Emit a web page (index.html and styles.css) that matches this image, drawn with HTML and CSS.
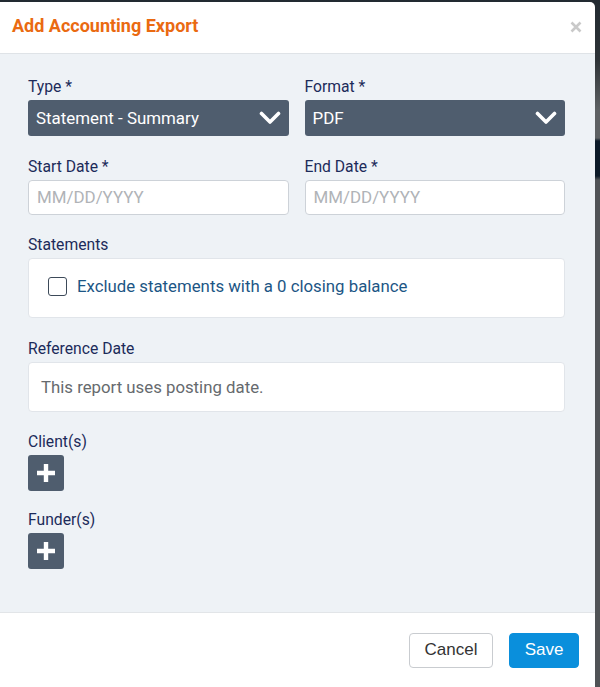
FILE: index.html
```html
<!DOCTYPE html>
<html>
<head>
<meta charset="utf-8">
<link rel="stylesheet" href="styles.css">
</head>
<body>
<div class="modal">
  <div class="modal-header">
    <h4 class="title">Add Accounting Export</h4>
    <span class="close"><svg width="12" height="12" viewBox="0 0 12 12"><path d="M1.5 1.5L10.5 10.5M10.5 1.5L1.5 10.5" stroke="#c9c9c9" stroke-width="2.6" stroke-linecap="butt"/></svg></span>
  </div>
  <div class="modal-body">
    <div class="row">
      <div class="field">
        <label class="lbl">Type *</label>
        <div class="select"><span>Statement - Summary</span><svg class="chev" width="22" height="14" viewBox="0 0 22 14"><path d="M2.5 2.5L11 11L19.5 2.5" fill="none" stroke="#fff" stroke-width="3.6" stroke-linecap="round" stroke-linejoin="round"/></svg></div>
      </div>
      <div class="field">
        <label class="lbl">Format *</label>
        <div class="select"><span>PDF</span><svg class="chev" width="22" height="14" viewBox="0 0 22 14"><path d="M2.5 2.5L11 11L19.5 2.5" fill="none" stroke="#fff" stroke-width="3.6" stroke-linecap="round" stroke-linejoin="round"/></svg></div>
      </div>
    </div>
    <div class="row">
      <div class="field">
        <label class="lbl">Start Date *</label>
        <div class="input">MM/DD/YYYY</div>
      </div>
      <div class="field">
        <label class="lbl">End Date *</label>
        <div class="input">MM/DD/YYYY</div>
      </div>
    </div>
    <div class="field">
      <label class="lbl">Statements</label>
      <div class="panel check-panel">
        <span class="checkbox"></span>
        <span class="check-text">Exclude statements with a 0 closing balance</span>
      </div>
    </div>
    <div class="field">
      <label class="lbl">Reference Date</label>
      <div class="panel ref-panel">This report uses posting date.</div>
    </div>
    <div class="field client">
      <label class="lbl">Client(s)</label>
      <button class="add"><svg width="20" height="20" viewBox="0 0 20 20"><path d="M10 1V19M1 10H19" stroke="#fff" stroke-width="4.4"/></svg></button>
    </div>
    <div class="field last">
      <label class="lbl">Funder(s)</label>
      <button class="add"><svg width="20" height="20" viewBox="0 0 20 20"><path d="M10 1V19M1 10H19" stroke="#fff" stroke-width="4.4"/></svg></button>
    </div>
  </div>
  <div class="modal-footer">
    <button class="btn btn-cancel">Cancel</button>
    <button class="btn btn-save">Save</button>
  </div>
</div>
</body>
</html>
```
FILE: styles.css
```css
html, body {
  margin: 0;
  padding: 0;
  height: 687px;
  overflow: hidden;
}
body {
  padding-top: 2px;
  box-sizing: border-box;
  background: linear-gradient(to bottom, #222a31 0, #2e3337 60px, #5e6163 110px, #5e6163 138px, #0c1a28 141px, #0c1a28 176px, #505356 180px, #505356 100%);
  font-family: Roboto, "Liberation Sans", sans-serif;
}
.modal {
  width: 595px;
  background: #fff;
  border-top-right-radius: 5px;
  overflow: hidden;
}
.modal-header {
  display: flex;
  align-items: flex-start;
  justify-content: space-between;
  padding: 13px 12px 0 12px;
  border-bottom: 1px solid #dfe3e7;
  box-sizing: border-box;
  height: 52px;
}
.title {
  margin: 0;
  font-size: 18px;
  line-height: 21px;
  font-weight: 700;
  color: #ea6a11;
}
.close {
  display: flex;
  margin-right: 1px;
  margin-top: 6px;
}
.modal-body {
  background: #eef2f6;
  padding: 24px 30px 43px 28px;
}
.row {
  display: grid;
  grid-template-columns: 1fr 1fr;
  gap: 16px;
}
.field {
  margin-bottom: 21.5px;
}
.field.client {
  margin-bottom: 19.5px;
}
.field.last {
  margin-bottom: 0;
}
.lbl {
  display: block;
  font-size: 15.7px;
  line-height: 18px;
  color: #1c2b5a;
  margin-bottom: 4px;
}
.select {
  height: 36px;
  background: #4f5d6e;
  border-radius: 3px;
  display: flex;
  align-items: center;
  justify-content: space-between;
  padding: 0 8px 0 8px;
  color: #fff;
  font-size: 16.9px;
}
.chev {
  display: block;
}
.input {
  height: 35px;
  box-sizing: border-box;
  background: #fff;
  border: 1px solid #cdd2d8;
  border-radius: 4px;
  padding: 0 8px;
  display: flex;
  align-items: center;
  font-size: 16.9px;
  color: #b0b3b7;
}
.panel {
  background: #fff;
  border: 1px solid #e1e5ea;
  border-radius: 4px;
  box-sizing: border-box;
}
.check-panel {
  height: 60px;
  display: flex;
  align-items: center;
  padding-left: 19px;
  gap: 10px;
}
.checkbox {
  width: 19px;
  height: 19px;
  box-sizing: border-box;
  border: 1.5px solid #3d4a59;
  border-radius: 3px;
  background: #fff;
  margin-top: -4px;
}
.check-text {
  font-size: 16.8px;
  color: #1c5685;
  margin-top: -4px;
}
.ref-panel {
  height: 50px;
  display: flex;
  align-items: center;
  padding-left: 12px;
  font-size: 16.8px;
  color: #666a6e;
}
.add {
  width: 36px;
  height: 36px;
  border: none;
  padding: 0;
  border-radius: 3px;
  background: #4f5d6e;
  display: flex;
  align-items: center;
  justify-content: center;
}
.modal-footer {
  border-top: 1px solid #e2e5e8;
  display: flex;
  justify-content: flex-end;
  gap: 16px;
  padding: 20px 16px 30px 0;
}
.btn {
  font-family: "Liberation Sans", Arial, sans-serif;
  font-size: 17px;
  height: 35px;
  border-radius: 4px;
  padding: 0 10px;
}
.btn-cancel {
  width: 84px;
  background: #fff;
  border: 1px solid #c9ccd0;
  color: #333;
}
.btn-save {
  width: 70px;
  background: #0a8fdc;
  border: 1px solid #0a8fdc;
  color: #fff;
}
```
